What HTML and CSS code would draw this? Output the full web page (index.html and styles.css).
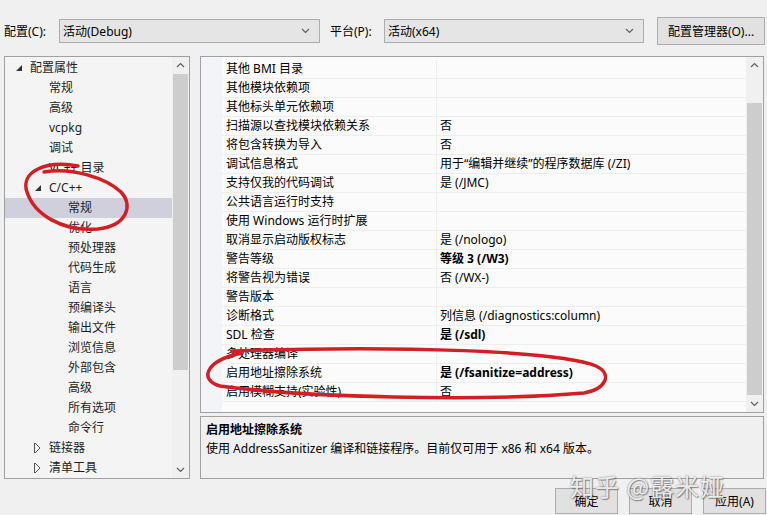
FILE: index.html
```html
<!DOCTYPE html>
<html lang="zh-CN">
  <head>
    <meta charset="UTF-8" />
    <meta name="viewport" content="width=device-width, initial-scale=1.0" />
    <title>属性页</title>
    <link rel="stylesheet" href="styles.css">
  </head>
  <body>
    <div class="dialog">
      <div class="toolbar">
        <span class="label">配置(C):</span>
        <div class="combo combo_config">
          <span>活动(Debug)</span>
          <svg class="chev" width="9" height="6" viewBox="0 0 9 6"><polyline points="1,1 4.5,4.5 8,1" /></svg>
        </div>
        <span class="label label_platform">平台(P):</span>
        <div class="combo combo_platform">
          <span>活动(x64)</span>
          <svg class="chev" width="9" height="6" viewBox="0 0 9 6"><polyline points="1,1 4.5,4.5 8,1" /></svg>
        </div>
        <button class="btn btn_manager">配置管理器(O)...</button>
      </div>

      <div class="main">
        <div class="tree">
          <ul class="tree_list">
            <li class="lv1"><span class="arrow open"></span>配置属性</li>
            <li class="lv2">常规</li>
            <li class="lv2">高级</li>
            <li class="lv2">vcpkg</li>
            <li class="lv2">调试</li>
            <li class="lv2">VC++ 目录</li>
            <li class="lv2"><span class="arrow open"></span>C/C++</li>
            <li class="lv3 selected">常规</li>
            <li class="lv3">优化</li>
            <li class="lv3">预处理器</li>
            <li class="lv3">代码生成</li>
            <li class="lv3">语言</li>
            <li class="lv3">预编译头</li>
            <li class="lv3">输出文件</li>
            <li class="lv3">浏览信息</li>
            <li class="lv3">外部包含</li>
            <li class="lv3">高级</li>
            <li class="lv3">所有选项</li>
            <li class="lv3">命令行</li>
            <li class="lv2"><span class="arrow closed"></span>链接器</li>
            <li class="lv2"><span class="arrow closed"></span>清单工具</li>
          </ul>
          <div class="scrollbar">
            <svg class="sb_btn" width="17" height="17" viewBox="0 0 17 17"><polyline points="5,10 8.5,6.5 12,10" /></svg>
            <div class="sb_track track_top"><span class="thumb thumb_tree"></span></div>
            <svg class="sb_btn" width="17" height="17" viewBox="0 0 17 17"><polyline points="5,7 8.5,10.5 12,7" /></svg>
          </div>
        </div>

        <div class="right">
          <div class="props">
            <div class="prop_rows" id="rows"></div>
            <div class="scrollbar">
              <svg class="sb_btn" width="17" height="17" viewBox="0 0 17 17"><polyline points="5,10 8.5,6.5 12,10" /></svg>
              <div class="sb_track track_bottom"><span class="thumb thumb_props"></span></div>
              <svg class="sb_btn" width="17" height="17" viewBox="0 0 17 17"><polyline points="5,7 8.5,10.5 12,7" /></svg>
            </div>
          </div>
          <div class="desc">
            <p class="desc_title">启用地址擦除系统</p>
            <p class="desc_text">使用 AddressSanitizer 编译和链接程序。目前仅可用于 x86 和 x64 版本。</p>
          </div>
        </div>
      </div>

      <div class="footer">
        <button class="btn btn_foot">确定</button>
        <button class="btn btn_foot">取消</button>
        <button class="btn btn_foot">应用(A)</button>
      </div>
    </div>

    <div class="watermark">知乎 @露米娅</div>

    <svg class="marks" width="767" height="515" viewBox="0 0 767 515">
      <path d="M 78 166 C 45 160, 20 172, 27 192 C 34 214, 62 232, 98 229 C 126 226, 134 206, 121 192 C 106 178, 72 167, 44 172" />
      <path d="M 232 351 C 400 345, 560 351, 596 366 C 613 374, 606 389, 584 393 C 480 402, 300 397, 220 386 C 200 381, 203 361, 242 353" />
    </svg>

    <script>
      const props = [
        ["其他 BMI 目录", ""],
        ["其他模块依赖项", ""],
        ["其他标头单元依赖项", ""],
        ["扫描源以查找模块依赖关系", "否"],
        ["将包含转换为导入", "否"],
        ["调试信息格式", "用于“编辑并继续”的程序数据库 (/ZI)"],
        ["支持仅我的代码调试", "是 (/JMC)"],
        ["公共语言运行时支持", ""],
        ["使用 Windows 运行时扩展", ""],
        ["取消显示启动版权标志", "是 (/nologo)"],
        ["警告等级", "等级 3 (/W3)", true],
        ["将警告视为错误", "否 (/WX-)"],
        ["警告版本", ""],
        ["诊断格式", "列信息 (/diagnostics:column)"],
        ["SDL 检查", "是 (/sdl)", true],
        ["多处理器编译", ""],
        ["启用地址擦除系统", "是 (/fsanitize=address)", true],
        ["启用模糊支持(实验性)", "否"],
      ];

      const rowsEl = document.getElementById("rows");
      rowsEl.innerHTML = props
        .map(
          ([name, value, bold]) =>
            `<div class="prop_row"><span class="gutter"></span><span class="pname">${name}</span><span class="pvalue${bold ? " bold" : ""}">${value}</span></div>`
        )
        .join("");
    </script>
  </body>
</html>
```

FILE: styles.css
```css
body {
  margin: 0;
  background: #f0f0f0;
  font-family: "Noto Sans", "Noto Sans CJK SC", sans-serif;
  font-size: 12px;
  color: #000;
  width: 767px;
  height: 515px;
  overflow: hidden;
  position: relative;
}

p {
  margin: 0;
}

.dialog {
  padding: 17px 0 0 4px;
}

.toolbar {
  display: flex;
  align-items: center;
  height: 28px;
}

.label {
  width: 55px;
}

.label_platform {
  margin-left: 10px;
  width: 54px;
}

.combo {
  display: flex;
  align-items: center;
  justify-content: space-between;
  box-sizing: border-box;
  height: 24px;
  padding: 0 9px 0 3px;
  background: #e5e5e5;
  border: 1px solid #adadad;
}

.combo_config {
  width: 261px;
}

.combo_platform {
  width: 260px;
}

.chev polyline,
.sb_btn polyline {
  fill: none;
  stroke: #606060;
  stroke-width: 1.2;
}

.btn {
  box-sizing: border-box;
  background: #e1e1e1;
  border: 1px solid #adadad;
  font-family: inherit;
  font-size: 12px;
  color: #000;
  padding: 0;
}

.btn_manager {
  margin-left: 13px;
  width: 108px;
  height: 28px;
}

.main {
  display: grid;
  grid-template-columns: 186px 564px;
  column-gap: 10px;
  margin-top: 11px;
  height: 420px;
}

.tree {
  display: flex;
  border: 1px solid #a0a0a0;
  background: #f4f4f4;
}

.tree_list {
  list-style: none;
  margin: 0;
  padding: 1px 0 0;
  flex: 1;
  color: #1e1e1e;
}

.tree_list li {
  height: 20px;
  line-height: 20px;
  display: flex;
  align-items: center;
  white-space: nowrap;
}

.lv1 {
  padding-left: 25px;
}

.lv2 {
  padding-left: 44px;
}

.lv3 {
  padding-left: 63px;
}

.selected {
  background: #cfd0dc;
}

.arrow {
  width: 0;
  height: 0;
  margin-left: -14px;
  margin-right: 8px;
}

.arrow.open {
  border-left: 6px solid transparent;
  border-bottom: 6px solid #333;
}

.arrow.closed {
  box-sizing: border-box;
  width: 6px;
  height: 10px;
  margin-left: -15px;
  margin-right: 9px;
  background: linear-gradient(to top right, transparent 48%, #555 50%, transparent 60%) top / 100% 50% no-repeat,
    linear-gradient(to bottom right, transparent 48%, #555 50%, transparent 60%) bottom / 100% 50% no-repeat;
  border-left: 1px solid #555;
}

.scrollbar {
  width: 17px;
  display: flex;
  flex-direction: column;
  background: #f0f0f0;
}

.sb_btn {
  flex: none;
}

.sb_track {
  flex: 1;
  display: flex;
  flex-direction: column;
}

.track_bottom {
  justify-content: flex-end;
}

.thumb {
  display: block;
  background: #cdcdcd;
  margin: 0 1px;
}

.thumb_tree {
  height: 296px;
}

.thumb_props {
  height: 292px;
}

.right {
  display: flex;
  flex-direction: column;
  gap: 3px;
}

.props {
  display: flex;
  height: 357px;
  box-sizing: border-box;
  border: 1px solid #a0a0a0;
  background: #fbfbfb;
}

.prop_rows {
  flex: 1;
  padding-top: 3px;
  background: linear-gradient(to right, #f3f4f8 21px, transparent 21px);
}

.prop_row {
  display: grid;
  grid-template-columns: 21px 214px 1fr;
  height: 19px;
  line-height: 18px;
  white-space: nowrap;
}

.pname,
.pvalue {
  border-bottom: 1px solid #eeeeee;
  padding-left: 4px;
}

.pvalue {
  border-left: 1px solid #eeeeee;
  padding-left: 3px;
}

.bold {
  font-weight: bold;
}

.desc {
  flex: 1;
  box-sizing: border-box;
  border: 1px solid #a0a0a0;
  background: #f0f0f0;
  padding: 3px 5px;
  line-height: 19px;
}

.desc_title {
  font-weight: bold;
}

.footer {
  display: flex;
  justify-content: flex-end;
  gap: 11px;
  margin-top: 12px;
  padding-right: 1px;
}

.btn_foot {
  width: 63px;
  height: 26px;
}

.watermark {
  position: absolute;
  left: 570px;
  top: 468px;
  font-size: 24px;
  font-family: "Noto Sans CJK SC", sans-serif;
  color: rgba(255, 255, 255, 0.85);
  text-shadow: 0 0 2px rgba(90, 90, 90, 0.8), 1px 1px 1px rgba(90, 90, 90, 0.6);
  letter-spacing: 1px;
  pointer-events: none;
}

.marks {
  position: absolute;
  left: 0;
  top: 0;
  pointer-events: none;
}

.marks path {
  fill: none;
  stroke: #d21f24;
  stroke-width: 3.5;
  stroke-linecap: round;
}
```
